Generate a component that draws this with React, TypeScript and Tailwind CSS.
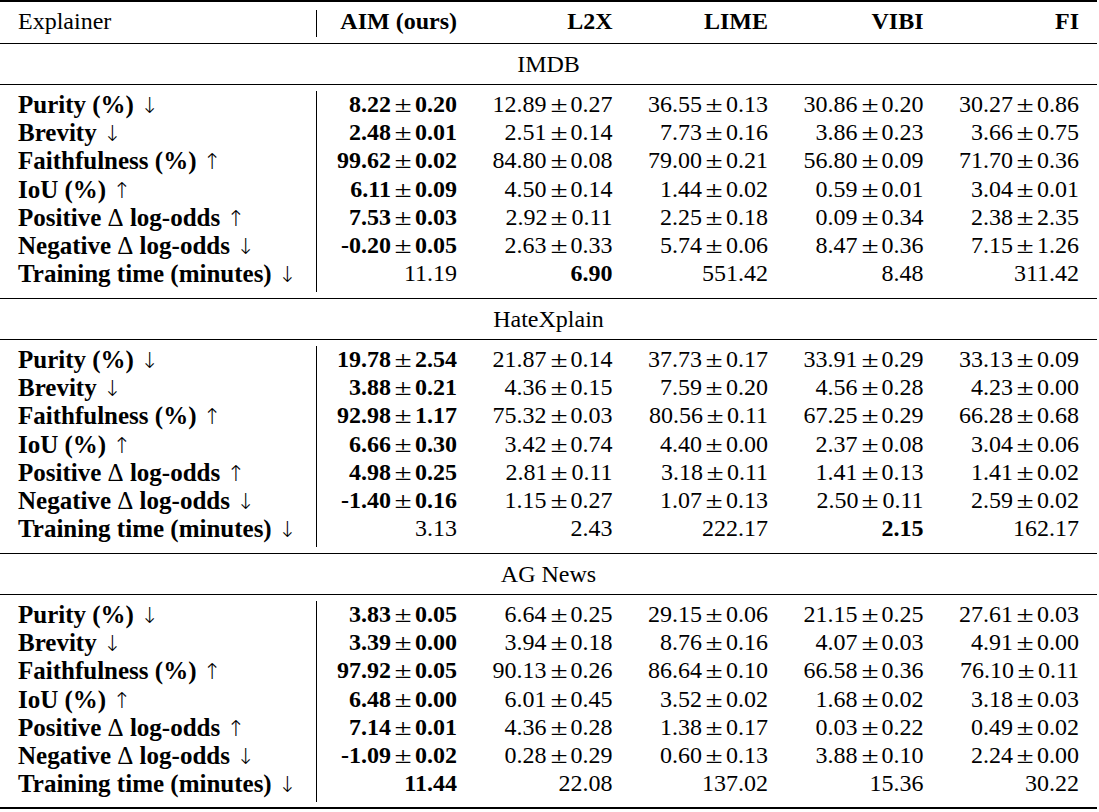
import React from "react";

type Section = { name: string; rows: string[][] };

const labels: { text: React.ReactNode; arrow: string }[] = [
  { text: "Purity (%)", arrow: "↓" },
  { text: "Brevity", arrow: "↓" },
  { text: "Faithfulness (%)", arrow: "↑" },
  { text: "IoU (%)", arrow: "↑" },
  {
    text: (
      <>
        Positive <span className="font-normal">Δ</span> log-odds
      </>
    ),
    arrow: "↑",
  },
  {
    text: (
      <>
        Negative <span className="font-normal">Δ</span> log-odds
      </>
    ),
    arrow: "↓",
  },
  { text: "Training time (minutes)", arrow: "↓" },
];

// "*" marks a bold (best) value
const sections: Section[] = [
  {
    name: "IMDB",
    rows: [
      ["*8.22±0.20", "12.89±0.27", "36.55±0.13", "30.86±0.20", "30.27±0.86"],
      ["*2.48±0.01", "2.51±0.14", "7.73±0.16", "3.86±0.23", "3.66±0.75"],
      ["*99.62±0.02", "84.80±0.08", "79.00±0.21", "56.80±0.09", "71.70±0.36"],
      ["*6.11±0.09", "4.50±0.14", "1.44±0.02", "0.59±0.01", "3.04±0.01"],
      ["*7.53±0.03", "2.92±0.11", "2.25±0.18", "0.09±0.34", "2.38±2.35"],
      ["*-0.20±0.05", "2.63±0.33", "5.74±0.06", "8.47±0.36", "7.15±1.26"],
      ["11.19", "*6.90", "551.42", "8.48", "311.42"],
    ],
  },
  {
    name: "HateXplain",
    rows: [
      ["*19.78±2.54", "21.87±0.14", "37.73±0.17", "33.91±0.29", "33.13±0.09"],
      ["*3.88±0.21", "4.36±0.15", "7.59±0.20", "4.56±0.28", "4.23±0.00"],
      ["*92.98±1.17", "75.32±0.03", "80.56±0.11", "67.25±0.29", "66.28±0.68"],
      ["*6.66±0.30", "3.42±0.74", "4.40±0.00", "2.37±0.08", "3.04±0.06"],
      ["*4.98±0.25", "2.81±0.11", "3.18±0.11", "1.41±0.13", "1.41±0.02"],
      ["*-1.40±0.16", "1.15±0.27", "1.07±0.13", "2.50±0.11", "2.59±0.02"],
      ["3.13", "2.43", "222.17", "*2.15", "162.17"],
    ],
  },
  {
    name: "AG News",
    rows: [
      ["*3.83±0.05", "6.64±0.25", "29.15±0.06", "21.15±0.25", "27.61±0.03"],
      ["*3.39±0.00", "3.94±0.18", "8.76±0.16", "4.07±0.03", "4.91±0.00"],
      ["*97.92±0.05", "90.13±0.26", "86.64±0.10", "66.58±0.36", "76.10±0.11"],
      ["*6.48±0.00", "6.01±0.45", "3.52±0.02", "1.68±0.02", "3.18±0.03"],
      ["*7.14±0.01", "4.36±0.28", "1.38±0.17", "0.03±0.22", "0.49±0.02"],
      ["*-1.09±0.02", "0.28±0.29", "0.60±0.13", "3.88±0.10", "2.24±0.00"],
      ["*11.44", "22.08", "137.02", "15.36", "30.22"],
    ],
  },
];

const colW = ["w-[141px]", "w-[155.5px]", "w-[155.5px]", "w-[155.5px]", "w-[155.5px]"];

function Value({ raw }: { raw: string }) {
  const bold = raw.startsWith("*");
  const v = bold ? raw.slice(1) : raw;
  const [a, b] = v.split("±");
  return (
    <div className={bold ? "font-bold" : ""}>
      {a}
      {b !== undefined && (
        <>
          <span className="inline-block w-[18px] mx-[3px] text-center font-normal scale-x-[1.3]">±</span>
          {b}
        </>
      )}
    </div>
  );
}

function Arrow({ ch }: { ch: string }) {
  return (
    <span className="font-['Noto_Sans','DejaVu_Sans',sans-serif] font-light text-[22px]">{ch}</span>
  );
}

function DataBlock({ rows, last }: { rows: string[][]; last?: boolean }) {
  return (
    <div className={`flex pt-[6px] ${last ? "h-[212px]" : "h-[213px]"}`}>
      <div className="w-[316px] pl-[18px] h-[201px]">
        <div className="-mt-[1px] leading-[28.2px] font-bold text-[25px]">
          {labels.map((l, i) => (
            <div key={i} className="h-[28.2px]">
              {l.text} <Arrow ch={l.arrow} />
            </div>
          ))}
        </div>
      </div>
      {colW.map((w, c) => (
        <div
          key={c}
          className={`${w} h-[201px] text-right ${c === 0 ? "border-l border-black" : ""}`}
        >
          <div className="-mt-[1px] leading-[28.2px]">
            {rows.map((r, i) => (
              <Value key={i} raw={r[c]} />
            ))}
          </div>
        </div>
      ))}
    </div>
  );
}

export default function App() {
  const heads = ["AIM (ours)", "L2X", "LIME", "VIBI", "FI"];
  return (
    <div className="min-h-screen bg-white text-black">
      <div className="w-[1097px] font-['Liberation_Serif',serif] text-[24px]">
        <div className="h-[2px] bg-black" />
        {/* header */}
        <div className="flex h-[41px] pt-[8px]">
          <div className="w-[316px] pl-[18px] h-[27px]">
            <div className="-mt-[2px] leading-[27px]">Explainer</div>
          </div>
          {colW.map((w, c) => (
            <div
              key={c}
              className={`${w} h-[27px] text-right font-bold ${c === 0 ? "border-l border-black" : ""}`}
            >
              <div className="-mt-[2px] leading-[27px]">{heads[c]}</div>
            </div>
          ))}
        </div>
        {sections.map((s, i) => (
          <div key={s.name}>
            <div className="h-px bg-black" />
            <div className="h-[40px] flex items-center justify-center">{s.name}</div>
            <div className="h-px bg-black" />
            <DataBlock rows={s.rows} last={i === sections.length - 1} />
          </div>
        ))}
        <div className="h-[2px] bg-black" />
      </div>
    </div>
  );
}
